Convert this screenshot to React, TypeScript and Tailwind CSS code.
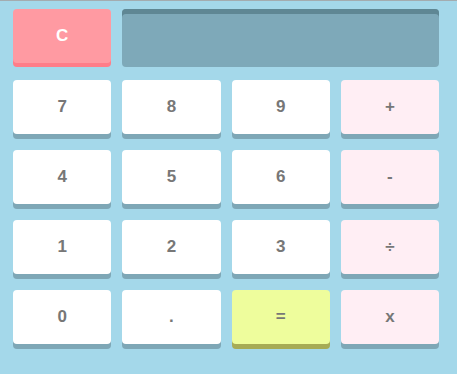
import React, { useState } from 'react'

const keys = [
  { label: '7', kind: 'num' },
  { label: '8', kind: 'num' },
  { label: '9', kind: 'num' },
  { label: '+', kind: 'op' },
  { label: '4', kind: 'num' },
  { label: '5', kind: 'num' },
  { label: '6', kind: 'num' },
  { label: '-', kind: 'op' },
  { label: '1', kind: 'num' },
  { label: '2', kind: 'num' },
  { label: '3', kind: 'num' },
  { label: '÷', kind: 'op' },
  { label: '0', kind: 'num' },
  { label: '.', kind: 'num' },
  { label: '=', kind: 'eq' },
  { label: 'x', kind: 'op' },
]

const styles: Record<string, string> = {
  num: 'bg-white shadow-[0_5px_0_#7ea7b6]',
  op: 'bg-[#ffeef4] shadow-[0_5px_0_#7ea7b6]',
  eq: 'bg-[#eefd9c] shadow-[0_5px_0_#a6ab55]',
}

function App() {
  const [display, setDisplay] = useState('')

  const press = (k: string) => {
    if (k === '=') {
      try {
        const expr = display.replace(/x/g, '*').replace(/÷/g, '/')
        // eslint-disable-next-line no-new-func
        setDisplay(String(Function(`return (${expr})`)()))
      } catch {
        setDisplay('')
      }
      return
    }
    setDisplay(d => d + k)
  }

  return (
    <div className="w-[457px] h-[374px] bg-[#a4d8ea] border-t border-[#a3acb0] font-['Liberation_Sans',Arial,sans-serif]">
      <div className="pl-[13px] pr-[18px] pt-[8px]">
        <div className="grid grid-cols-4 gap-x-[11px] mb-[13px]">
          <button
            onClick={() => setDisplay('')}
            className="h-[54px] rounded-[4px] bg-[#ff9aa2] shadow-[0_4px_0_#ff7d89] text-white font-bold text-[17px]"
          >
            C
          </button>
          <div className="col-span-3 h-[58px] rounded-[4px] bg-[#7ea9b9] shadow-[inset_0_5px_0_#5f8794] flex items-center justify-end px-4 text-white text-xl font-bold">
            {display}
          </div>
        </div>
        <div className="grid grid-cols-4 gap-x-[11px] gap-y-[16px]">
          {keys.map(k => (
            <button
              key={k.label}
              onClick={() => press(k.label)}
              className={`h-[54px] rounded-[4px] text-[#777] font-bold text-[17px] ${styles[k.kind]}`}
            >
              {k.label}
            </button>
          ))}
        </div>
      </div>
    </div>
  )
}

export default App
